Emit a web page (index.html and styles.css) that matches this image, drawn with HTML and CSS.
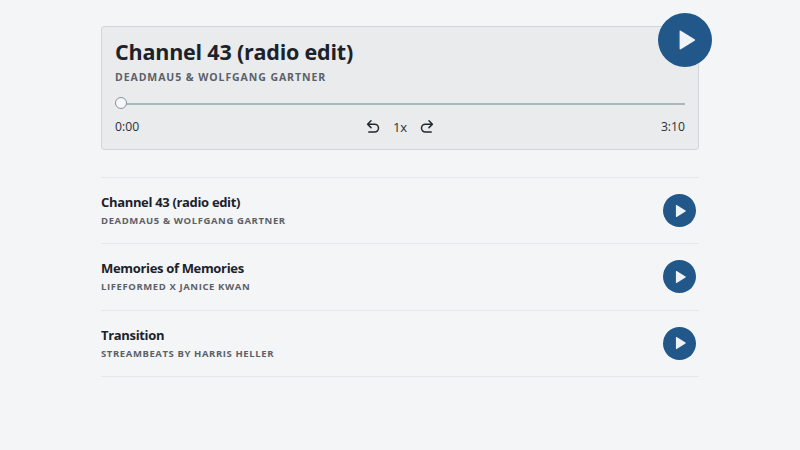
FILE: index.html
```html
<!DOCTYPE html>
<html lang="en">
<head>
<meta charset="utf-8">
<title>Audio player</title>
<link rel="stylesheet" href="styles.css">
</head>
<body>
<main class="page">
  <section class="player">
    <h1 class="player-title">Channel 43 (radio edit)</h1>
    <p class="player-artist">DEADMAU5 &amp; WOLFGANG GARTNER</p>
    <div class="track"><span class="thumb"></span></div>
    <div class="controls">
      <span class="time">0:00</span>
      <div class="center">
        <svg class="ctl" viewBox="0 0 16 16" width="16" height="16"><path d="M3 5.2h6.6a3.9 3.9 0 0 1 0 7.8H3.8M6 1.8 2.6 5.2 6 8.6" /></svg>
        <span class="speed">1x</span>
        <svg class="ctl" viewBox="0 0 16 16" width="16" height="16"><path d="M13 5.2H6.4a3.9 3.9 0 0 0 0 7.8h5.8M10 1.8l3.4 3.4L10 8.6" /></svg>
      </div>
      <span class="time">3:10</span>
    </div>
    <button class="play play-large" aria-label="Play"><svg class="tri-large" viewBox="0 0 24 24" width="22" height="22"><path class="tri" d="M5 2.6v18.8a.9.9 0 0 0 1.4.8l15-9.4a.9.9 0 0 0 0-1.6l-15-9.4A.9.9 0 0 0 5 2.6z"/></svg></button>
  </section>
  <ul class="list">
    <li class="row">
      <div><h2 class="row-title">Channel 43 (radio edit)</h2><p class="row-artist">DEADMAU5 &amp; WOLFGANG GARTNER</p></div>
      <button class="play" aria-label="Play"><svg viewBox="0 0 24 24" width="14" height="14"><path class="tri" d="M5 2.6v18.8a.9.9 0 0 0 1.4.8l15-9.4a.9.9 0 0 0 0-1.6l-15-9.4A.9.9 0 0 0 5 2.6z"/></svg></button>
    </li>
    <li class="row">
      <div><h2 class="row-title">Memories of Memories</h2><p class="row-artist">LIFEFORMED X JANICE KWAN</p></div>
      <button class="play" aria-label="Play"><svg viewBox="0 0 24 24" width="14" height="14"><path class="tri" d="M5 2.6v18.8a.9.9 0 0 0 1.4.8l15-9.4a.9.9 0 0 0 0-1.6l-15-9.4A.9.9 0 0 0 5 2.6z"/></svg></button>
    </li>
    <li class="row">
      <div><h2 class="row-title">Transition</h2><p class="row-artist">STREAMBEATS BY HARRIS HELLER</p></div>
      <button class="play" aria-label="Play"><svg viewBox="0 0 24 24" width="14" height="14"><path class="tri" d="M5 2.6v18.8a.9.9 0 0 0 1.4.8l15-9.4a.9.9 0 0 0 0-1.6l-15-9.4A.9.9 0 0 0 5 2.6z"/></svg></button>
    </li>
  </ul>
</main>
</body>
</html>
```
FILE: styles.css
```css
* { box-sizing: border-box; }
html, body { margin: 0; height: 100%; }
body {
  background: #f4f5f7;
  color: #1c2229;
  font-family: "Open Sans", "Noto Sans", sans-serif;
  overflow: hidden;
}
.page { width: 598px; margin: 0 0 0 101px; padding-top: 26px; }
.player {
  position: relative;
  height: 124px;
  padding: 10px 13px 0 13px;
  background: #e9ebed;
  border: 1px solid #d3d6d9;
  border-radius: 3px;
}
.player-title { margin: 0; font-size: 21.5px; line-height: 30px; font-weight: 700; letter-spacing: -0.2px; }
.player-artist {
  margin: 3px 0 0;
  font-size: 10.5px;
  line-height: 15px;
  font-weight: 700;
  letter-spacing: 0.92px;
  color: #5c6168;
}
.track {
  position: relative;
  height: 1.5px;
  margin-top: 18px;
  background: #a9b8c0;
}
.thumb {
  position: absolute;
  left: 0;
  top: -6px;
  width: 12px;
  height: 12px;
  border-radius: 50%;
  background: #f5f7f9;
  border: 1px solid #8a949c;
}
.controls {
  display: flex;
  align-items: center;
  justify-content: space-between;
  margin-top: 12px;
  height: 20px;
  font-size: 12.2px;
  color: #2a3037;
}
.center { display: flex; align-items: center; gap: 12px; }
.speed { font-size: 13px; }
.ctl { fill: none; stroke: #23292f; stroke-width: 1.5; stroke-linecap: round; stroke-linejoin: round; }
.play {
  display: flex;
  align-items: center;
  justify-content: center;
  width: 33px;
  height: 33px;
  padding: 0;
  border: 0;
  border-radius: 50%;
  background: #22578a;
  flex: none;
  margin-right: 3px;
}
.play-large {
  position: absolute;
  right: -14px;
  top: -14px;
  margin: 0;
  width: 54px;
  height: 54px;
}
.tri-large { margin-left: 2px; }
.tri { fill: #eef1f5; }
.list { list-style: none; margin: 27px 0 0; padding: 0; border-top: 1px solid #e5e7ea; }
.row {
  display: flex;
  align-items: center;
  justify-content: space-between;
  height: 66.3px;
  border-bottom: 1px solid #e5e7ea;
}
.row-title { margin: 0; font-size: 13px; line-height: 16px; font-weight: 700; letter-spacing: -0.33px; color: #1c2229; }
.row-artist {
  margin: 4px 0 0;
  font-size: 9.5px;
  line-height: 13px;
  font-weight: 700;
  letter-spacing: 0.6px;
  color: #5c6168;
}
```
